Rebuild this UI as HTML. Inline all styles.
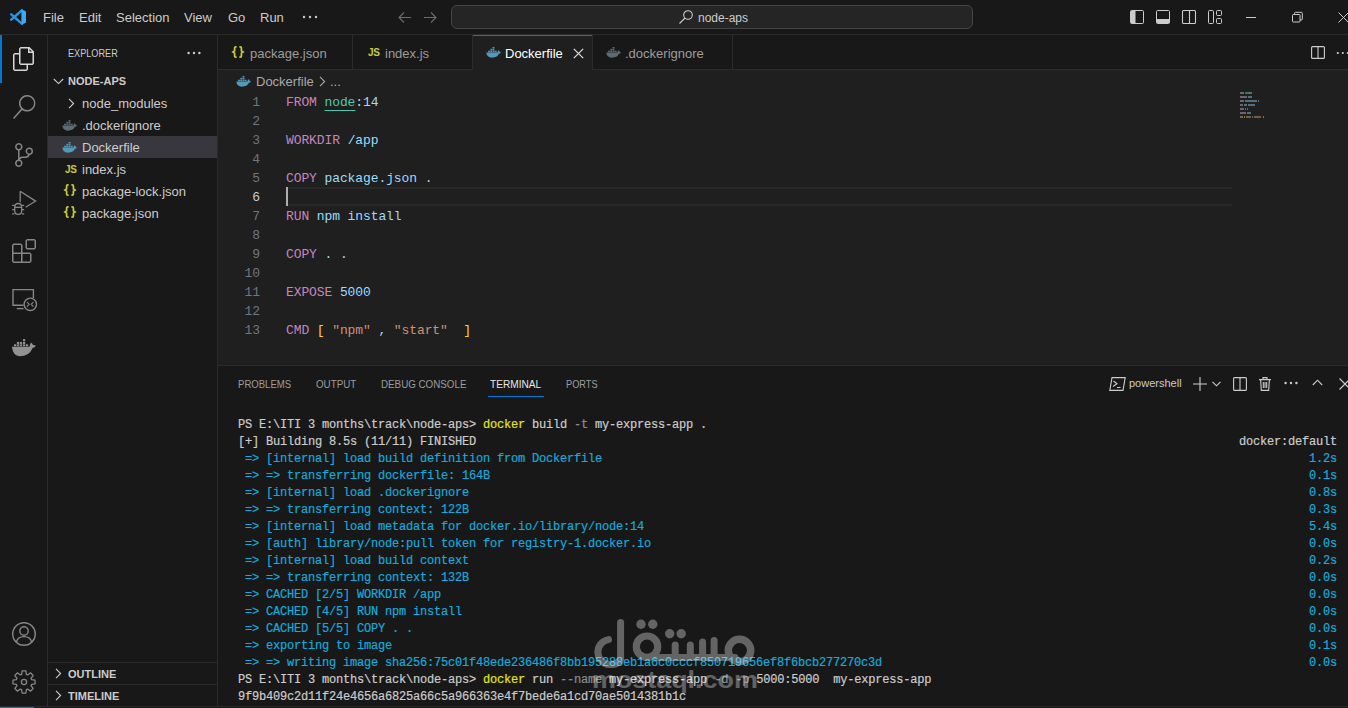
<!DOCTYPE html>
<html><head><meta charset="utf-8">
<style>
*{margin:0;padding:0;box-sizing:border-box}
html,body{width:1348px;height:708px;overflow:hidden;background:#181818;font-family:"Liberation Sans",sans-serif;color:#cccccc}
.a{position:absolute}
.t{position:absolute;white-space:pre;line-height:1}
.mono{font-family:"Liberation Mono",monospace}
svg{position:absolute;overflow:visible}
.term{font-size:12px;line-height:17px;letter-spacing:-0.2px;-webkit-text-stroke:0.2px currentColor}
</style></head><body>
<!-- title bar -->
<div class="a" style="left:0;top:0;width:1348px;height:34px;background:#181818"></div>
<div class="a" style="left:0;top:34px;width:1348px;height:1px;background:#2b2b2b"></div>
<div id="menu">
<span class="t" style="left:43px;top:11px;font-size:13px">File</span>
<span class="t" style="left:79px;top:11px;font-size:13px">Edit</span>
<span class="t" style="left:116px;top:11px;font-size:13px">Selection</span>
<span class="t" style="left:184px;top:11px;font-size:13px">View</span>
<span class="t" style="left:228px;top:11px;font-size:13px">Go</span>
<span class="t" style="left:260px;top:11px;font-size:13px">Run</span>
</div>
<!-- search box -->
<div class="a" style="left:451px;top:5px;width:522px;height:24px;background:#252525;border:1px solid #454545;border-radius:6px"></div>
<span class="t" style="left:698px;top:12px;font-size:12px">node-aps</span>


<!-- icons: title -->
<svg style="left:10px;top:9px" width="16" height="16" viewBox="0 0 16 16">
 <path d="M1.3 5.4L11.8 14.6M1.3 10.6L11.8 1.4" stroke="#2a95e0" stroke-width="2.5" stroke-linecap="round" fill="none"/>
 <path d="M11.4 0.2L15.3 2Q16 2.3 16 3.1V12.9Q16 13.7 15.3 14L11.4 15.8Z" fill="#3ca9f6"/>
</svg>
<svg style="left:302px;top:15px" width="16" height="4" viewBox="0 0 16 4"><circle cx="2" cy="2" r="1.2" fill="#cccccc"/><circle cx="8" cy="2" r="1.2" fill="#cccccc"/><circle cx="14" cy="2" r="1.2" fill="#cccccc"/></svg>
<svg style="left:397px;top:11px" width="16" height="14" viewBox="0 0 16 14" fill="none" stroke="#6b6b6b" stroke-width="1.1"><path d="M14 6.5H2.2M7 1.5L2 6.5L7 11.5"/></svg>
<svg style="left:422px;top:11px" width="16" height="14" viewBox="0 0 16 14" fill="none" stroke="#6b6b6b" stroke-width="1.1"><path d="M2 6.5H13.8M9 1.5L14 6.5L9 11.5"/></svg>
<svg style="left:678px;top:9px" width="16" height="16" viewBox="0 0 16 16" fill="none" stroke="#cccccc" stroke-width="1.1"><circle cx="10" cy="6" r="4.3"/><path d="M7 9L1.5 14.5"/></svg>
<!-- layout icons -->
<svg style="left:1129px;top:9px" width="16" height="16" viewBox="0 0 16 16"><rect x="1.5" y="1.5" width="13" height="13" rx="1" fill="none" stroke="#cccccc" stroke-width="1"/><rect x="2" y="2" width="4.5" height="12" fill="#cccccc"/></svg>
<svg style="left:1155px;top:9px" width="16" height="16" viewBox="0 0 16 16"><rect x="1.5" y="1.5" width="13" height="13" rx="1" fill="none" stroke="#cccccc" stroke-width="1"/><rect x="2" y="10" width="12" height="4" fill="#cccccc"/></svg>
<svg style="left:1181px;top:9px" width="16" height="16" viewBox="0 0 16 16" fill="none" stroke="#cccccc" stroke-width="1.1"><rect x="1.5" y="1.5" width="13" height="13" rx="1"/><path d="M8.5 1.5V14.5"/></svg>
<svg style="left:1207px;top:9px" width="16" height="16" viewBox="0 0 16 16" fill="none" stroke="#cccccc" stroke-width="1"><rect x="1.5" y="1.5" width="5" height="13" rx="1"/><rect x="9.5" y="1.5" width="5" height="5" rx="1"/><rect x="9.5" y="9.5" width="5" height="5" rx="1"/></svg>
<div class="a" style="left:1246px;top:17px;width:10px;height:1px;background:#cccccc"></div>
<svg style="left:1288px;top:8px" width="18" height="18" viewBox="1288 8 18 18" fill="none" stroke="#cccccc" stroke-width="1"><rect x="1292.5" y="14.5" width="7.5" height="7.5" rx="0.8"/><path d="M1294.5 14.5V13.3Q1294.5 12.3 1295.5 12.3H1301.3Q1302.3 12.3 1302.3 13.3V19Q1302.3 20 1301.3 20H1300"/></svg>
<svg style="left:1338px;top:12px" width="12" height="11" viewBox="0 0 12 11" fill="none" stroke="#cccccc" stroke-width="1"><path d="M0.5 0.5L10.5 10.5M10.5 0.5L0.5 10.5"/></svg>

<!-- activity bar icons -->
<svg style="left:12px;top:47px" width="24" height="24" viewBox="0 0 24 24"><path fill="#d7d7d7" d="M17.5 0h-9L7 1.5V6H2.5L1 7.5v15.07L2.5 24h12.07L16 22.57V18h4.7l1.3-1.43V4.5L17.5 0zm0 2.12l2.38 2.38H17.5V2.12zm-3 20.38h-12v-15H7v9.07L8.5 18h6v4.5zm6-6h-12v-15H16V6h4.5v10.5z"/></svg>
<svg style="left:12px;top:95px" width="24" height="24" viewBox="0 0 24 24"><path fill="#868686" d="M15.25 0a8.25 8.25 0 0 0-6.18 13.72L1 22.88l1.12 1.12 8.05-9.12A8.251 8.251 0 1 0 15.25.01V0zm0 15a6.75 6.75 0 1 1 0-13.5 6.75 6.75 0 0 1 0 13.5z"/></svg>
<svg style="left:12px;top:143px" width="24" height="24" viewBox="0 0 24 24"><path fill="#868686" d="M21.007 8.222A3.738 3.738 0 0 0 15.045 5.2a3.737 3.737 0 0 0 1.156 6.583 2.988 2.988 0 0 1-2.668 1.67h-2.99a4.456 4.456 0 0 0-2.989 1.165V7.4a3.737 3.737 0 1 0-1.494 0v9.117a3.776 3.776 0 1 0 1.816.099 2.99 2.99 0 0 1 2.668-1.667h2.99a4.484 4.484 0 0 0 4.223-3.039 3.736 3.736 0 0 0 3.25-3.687zM4.565 3.738a2.242 2.242 0 1 1 4.484 0 2.242 2.242 0 0 1-4.484 0zm4.484 16.441a2.242 2.242 0 1 1-4.484 0 2.242 2.242 0 0 1 4.484 0zm8.221-9.715a2.242 2.242 0 1 1 0-4.485 2.242 2.242 0 0 1 0 4.485z"/></svg>
<svg style="left:8px;top:185px" width="32" height="35" viewBox="8 185 32 35" fill="none" stroke="#868686" stroke-width="1.3"><path d="M20.2 191.2V202.3M20.2 191.2L35.6 201.1L25.7 207.3"/><path d="M14.7 207.6Q14.7 203.5 18.2 203.5Q21.7 203.5 21.7 207.6V210.8Q21.7 214.4 18.2 214.4Q14.7 214.4 14.7 210.8ZM14.7 207.3H21.7M12.2 205.4H14.4M12.2 209.6H14.4M12.2 213.9H14.4M22 205.4H24.2M22 209.6H24.2M22 213.9H24.2"/></svg>
<svg style="left:12px;top:239px" width="24" height="24" viewBox="0 0 24 24"><path fill="#868686" d="M13.5 1.5L15 0h7.5L24 1.5V9l-1.5 1.5H15L13.5 9V1.5zm1.5 0V9h7.5V1.5H15zM0 15V6l1.5-1.5H9L10.5 6v7.5H18l1.5 1.5v7.5L18 24H1.5L0 22.5V15zm9-1.5V6H1.5v7.5H9zM9 15H1.5v7.5H9V15zm1.5 7.5H18V15h-7.5v7.5z"/></svg>
<svg style="left:9px;top:285px" width="30" height="28" viewBox="9 285 30 28" fill="none" stroke="#868686" stroke-width="1.4"><path d="M23.5 305.3H13V289.6H33.4V298"/><path d="M16.8 308.6H23.5"/><circle cx="30.3" cy="304.3" r="6.2"/><path d="M27 302.1L29.2 304.3L27 306.5M33.4 302.1L31.2 304.3L33.4 306.5" stroke-width="1.1"/></svg>
<svg style="left:9px;top:334px" width="30" height="26" viewBox="9 334 30 26"><g fill="#929292">
<rect x="23" y="339.1" width="2.2" height="2.1"/>
<rect x="16.9" y="341.9" width="2.2" height="2.1"/><rect x="19.9" y="341.9" width="2.2" height="2.1"/><rect x="23" y="341.9" width="2.2" height="2.1"/>
<rect x="14" y="344.3" width="2.2" height="2"/><rect x="16.9" y="344.3" width="2.2" height="2"/><rect x="19.9" y="344.3" width="2.2" height="2"/><rect x="23" y="344.3" width="2.2" height="2"/><rect x="25.9" y="344.3" width="2.2" height="2"/>
<path d="M11.9 346.7H29.5Q30 343.6 31 342.4Q32.6 343.5 33 345.1Q34.8 345 35.8 345.8Q34.8 347.6 32.6 347.9Q29.2 356.2 19.8 356.2Q13 356 11.9 346.7Z"/></g></svg>
<svg style="left:12px;top:622px" width="24" height="24" viewBox="0 0 24 24" fill="none" stroke="#868686" stroke-width="1.4"><circle cx="12" cy="12" r="11.3"/><circle cx="12" cy="9" r="4.2"/><path d="M4.3 20.3Q5.5 14.6 12 14.6Q18.5 14.6 19.7 20.3"/></svg>
<svg style="left:10px;top:668px" width="28" height="28" viewBox="10 668 28 28" fill="none" stroke="#868686" stroke-width="1.3" stroke-linejoin="round"><path d="M21.66 674.35L22.06 670.97L25.94 670.97L26.34 674.35L27.76 674.94L30.42 672.83L33.17 675.58L31.06 678.24L31.65 679.66L35.03 680.06L35.03 683.94L31.65 684.34L31.06 685.76L33.17 688.42L30.42 691.17L27.76 689.06L26.34 689.65L25.94 693.03L22.06 693.03L21.66 689.65L20.24 689.06L17.58 691.17L14.83 688.42L16.94 685.76L16.35 684.34L12.97 683.94L12.97 680.06L16.35 679.66L16.94 678.24L14.83 675.58L17.58 672.83L20.24 674.94Z"/><circle cx="24" cy="682" r="2.6"/></svg>

<!-- activity bar -->
<div class="a" style="left:47px;top:35px;width:1px;height:673px;background:#2b2b2b"></div>
<div class="a" style="left:0;top:35px;width:2px;height:48px;background:#0078d4"></div>

<!-- sidebar -->
<div class="a" style="left:217px;top:35px;width:1px;height:673px;background:#2b2b2b"></div>
<span class="t" style="left:68px;top:48px;font-size:11px;transform:scaleX(0.83);transform-origin:0 0">EXPLORER</span>
<span class="t" style="left:68px;top:76px;font-size:11px;font-weight:bold">NODE-APS</span>
<div class="a" style="left:48px;top:136px;width:169px;height:22px;background:#37373d"></div>
<span class="t" style="left:82px;top:97px;font-size:13px">node_modules</span>
<span class="t" style="left:82px;top:119px;font-size:13px">.dockerignore</span>
<span class="t" style="left:82px;top:141px;font-size:13px">Dockerfile</span>
<span class="t" style="left:82px;top:163px;font-size:13px">index.js</span>
<span class="t" style="left:82px;top:185px;font-size:13px">package-lock.json</span>
<span class="t" style="left:82px;top:207px;font-size:13px">package.json</span>
<div class="a" style="left:48px;top:662px;width:169px;height:1px;background:#2b2b2b"></div>
<div class="a" style="left:48px;top:684px;width:169px;height:1px;background:#2b2b2b"></div>
<span class="t" style="left:68px;top:669px;font-size:11px;font-weight:bold">OUTLINE</span>
<span class="t" style="left:68px;top:691px;font-size:11px;font-weight:bold">TIMELINE</span>

<!-- sidebar icons -->
<svg style="left:187px;top:51px" width="14" height="4" viewBox="0 0 14 4"><circle cx="1.6" cy="2" r="1.2" fill="#cccccc"/><circle cx="7" cy="2" r="1.2" fill="#cccccc"/><circle cx="12.4" cy="2" r="1.2" fill="#cccccc"/></svg>
<svg style="left:53px;top:78px" width="11" height="7" viewBox="0 0 11 7" fill="none" stroke="#cccccc" stroke-width="1.1"><path d="M0.8 1L5.5 5.6L10.2 1"/></svg>
<svg style="left:68px;top:98px" width="7" height="11" viewBox="0 0 7 11" fill="none" stroke="#cccccc" stroke-width="1.1"><path d="M1 0.8L5.6 5.5L1 10.2"/></svg>
<svg style="left:62px;top:120px" width="15" height="11" viewBox="0 0 16 11"><g fill="#5d6b72"><rect x="2.2" y="3.6" width="2" height="1.7"/><rect x="4.6" y="3.6" width="2" height="1.7"/><rect x="7" y="3.6" width="2" height="1.7"/><rect x="9.4" y="3.6" width="2" height="1.7"/><rect x="4.6" y="1.6" width="2" height="1.7"/><rect x="7" y="1.6" width="2" height="1.7"/><rect x="7" y="-0.4" width="2" height="1.7"/><path d="M0.3 5.6H12.2Q12.5 3.8 13.6 3.2Q14.6 4 14.6 5Q15.6 4.9 16 5.5Q15.3 6.8 13.8 6.9Q12 11 6.2 11Q1 11 0.3 5.6Z"/></g></svg>
<svg style="left:62px;top:142px" width="15" height="11" viewBox="0 0 16 11"><g fill="#519aba"><rect x="2.2" y="3.6" width="2" height="1.7"/><rect x="4.6" y="3.6" width="2" height="1.7"/><rect x="7" y="3.6" width="2" height="1.7"/><rect x="9.4" y="3.6" width="2" height="1.7"/><rect x="4.6" y="1.6" width="2" height="1.7"/><rect x="7" y="1.6" width="2" height="1.7"/><rect x="7" y="-0.4" width="2" height="1.7"/><path d="M0.3 5.6H12.2Q12.5 3.8 13.6 3.2Q14.6 4 14.6 5Q15.6 4.9 16 5.5Q15.3 6.8 13.8 6.9Q12 11 6.2 11Q1 11 0.3 5.6Z"/></g></svg>
<span class="t" style="left:65px;top:165px;font-size:10px;font-weight:bold;color:#cbcb41;letter-spacing:-0.3px">JS</span>
<svg style="left:64px;top:184px" width="12" height="12" viewBox="0 0 12 12" fill="none" stroke="#cbcb41" stroke-width="1.7"><path d="M4.6 0.9H3.7Q2.6 0.9 2.6 2V4.9L0.9 6L2.6 7.1V10Q2.6 11.1 3.7 11.1H4.6"/><path d="M7.4 0.9H8.3Q9.4 0.9 9.4 2V4.9L11.1 6L9.4 7.1V10Q9.4 11.1 8.3 11.1H7.4"/></svg>
<svg style="left:64px;top:206px" width="12" height="12" viewBox="0 0 12 12" fill="none" stroke="#cbcb41" stroke-width="1.7"><path d="M4.6 0.9H3.7Q2.6 0.9 2.6 2V4.9L0.9 6L2.6 7.1V10Q2.6 11.1 3.7 11.1H4.6"/><path d="M7.4 0.9H8.3Q9.4 0.9 9.4 2V4.9L11.1 6L9.4 7.1V10Q9.4 11.1 8.3 11.1H7.4"/></svg>
<svg style="left:55px;top:668px" width="7" height="11" viewBox="0 0 7 11" fill="none" stroke="#cccccc" stroke-width="1.1"><path d="M1 0.8L5.6 5.5L1 10.2"/></svg>
<svg style="left:55px;top:690px" width="7" height="11" viewBox="0 0 7 11" fill="none" stroke="#cccccc" stroke-width="1.1"><path d="M1 0.8L5.6 5.5L1 10.2"/></svg>

<!-- editor -->
<div class="a" style="left:218px;top:35px;width:1130px;height:35px;background:#181818"></div>
<div class="a" style="left:218px;top:69px;width:1130px;height:1px;background:#2b2b2b"></div>
<div class="a" style="left:218px;top:70px;width:1130px;height:295px;background:#1f1f1f"></div>
<!-- tabs -->
<div class="a" style="left:352px;top:35px;width:1px;height:34px;background:#2b2b2b"></div>
<div class="a" style="left:472px;top:35px;width:1px;height:34px;background:#2b2b2b"></div>
<div class="a" style="left:473px;top:35px;width:119px;height:35px;background:#1f1f1f;border-top:1px solid #0078d4"></div>
<div class="a" style="left:592px;top:35px;width:1px;height:34px;background:#2b2b2b"></div>
<div class="a" style="left:732px;top:35px;width:1px;height:34px;background:#2b2b2b"></div>
<span class="t" style="left:250px;top:47px;font-size:13px;color:#9d9d9d">package.json</span>
<span class="t" style="left:385px;top:47px;font-size:13px;color:#9d9d9d">index.js</span>
<span class="t" style="left:505px;top:47px;font-size:13px;color:#ffffff">Dockerfile</span>
<span class="t" style="left:625px;top:47px;font-size:13px;color:#9d9d9d">.dockerignore</span>
<span class="t" style="left:256px;top:75px;font-size:13px;color:#a9a9a9">Dockerfile</span>

<svg style="left:232px;top:46px" width="12" height="12" viewBox="0 0 12 12" fill="none" stroke="#cbcb41" stroke-width="1.7"><path d="M4.6 0.9H3.7Q2.6 0.9 2.6 2V4.9L0.9 6L2.6 7.1V10Q2.6 11.1 3.7 11.1H4.6"/><path d="M7.4 0.9H8.3Q9.4 0.9 9.4 2V4.9L11.1 6L9.4 7.1V10Q9.4 11.1 8.3 11.1H7.4"/></svg>
<span class="t" style="left:368px;top:48px;font-size:10px;font-weight:bold;color:#cbcb41;letter-spacing:-0.3px">JS</span>
<svg style="left:486px;top:47px" width="15" height="11" viewBox="0 0 16 11"><g fill="#519aba"><rect x="2.2" y="3.6" width="2" height="1.7"/><rect x="4.6" y="3.6" width="2" height="1.7"/><rect x="7" y="3.6" width="2" height="1.7"/><rect x="9.4" y="3.6" width="2" height="1.7"/><rect x="4.6" y="1.6" width="2" height="1.7"/><rect x="7" y="1.6" width="2" height="1.7"/><rect x="7" y="-0.4" width="2" height="1.7"/><path d="M0.3 5.6H12.2Q12.5 3.8 13.6 3.2Q14.6 4 14.6 5Q15.6 4.9 16 5.5Q15.3 6.8 13.8 6.9Q12 11 6.2 11Q1 11 0.3 5.6Z"/></g></svg>
<svg style="left:606px;top:47px" width="15" height="11" viewBox="0 0 16 11"><g fill="#5d6b72"><rect x="2.2" y="3.6" width="2" height="1.7"/><rect x="4.6" y="3.6" width="2" height="1.7"/><rect x="7" y="3.6" width="2" height="1.7"/><rect x="9.4" y="3.6" width="2" height="1.7"/><rect x="4.6" y="1.6" width="2" height="1.7"/><rect x="7" y="1.6" width="2" height="1.7"/><rect x="7" y="-0.4" width="2" height="1.7"/><path d="M0.3 5.6H12.2Q12.5 3.8 13.6 3.2Q14.6 4 14.6 5Q15.6 4.9 16 5.5Q15.3 6.8 13.8 6.9Q12 11 6.2 11Q1 11 0.3 5.6Z"/></g></svg>
<svg style="left:573px;top:48px" width="11" height="11" viewBox="0 0 11 11" fill="none" stroke="#e0e0e0" stroke-width="1.2"><path d="M0.8 0.8L10.2 10.2M10.2 0.8L0.8 10.2"/></svg>
<svg style="left:1311px;top:46px" width="14" height="13" viewBox="0 0 14 13" fill="none" stroke="#cccccc" stroke-width="1.1"><rect x="0.6" y="0.6" width="12.8" height="11.8" rx="1"/><path d="M7 0.6V12.4"/></svg>
<svg style="left:1336px;top:51px" width="14" height="4" viewBox="0 0 14 4"><circle cx="1.8" cy="2" r="1.1" fill="#cccccc"/><circle cx="6.8" cy="2" r="1.1" fill="#cccccc"/><circle cx="11.8" cy="2" r="1.1" fill="#cccccc"/></svg>
<svg style="left:236px;top:76px" width="15" height="11" viewBox="0 0 16 11"><g fill="#519aba"><rect x="2.2" y="3.6" width="2" height="1.7"/><rect x="4.6" y="3.6" width="2" height="1.7"/><rect x="7" y="3.6" width="2" height="1.7"/><rect x="9.4" y="3.6" width="2" height="1.7"/><rect x="4.6" y="1.6" width="2" height="1.7"/><rect x="7" y="1.6" width="2" height="1.7"/><rect x="7" y="-0.4" width="2" height="1.7"/><path d="M0.3 5.6H12.2Q12.5 3.8 13.6 3.2Q14.6 4 14.6 5Q15.6 4.9 16 5.5Q15.3 6.8 13.8 6.9Q12 11 6.2 11Q1 11 0.3 5.6Z"/></g></svg>
<svg style="left:319px;top:76px" width="7" height="11" viewBox="0 0 7 11" fill="none" stroke="#a9a9a9" stroke-width="1.1"><path d="M1 0.8L5.6 5.5L1 10.2"/></svg>
<span class="t" style="left:330px;top:75px;font-size:13px;color:#a9a9a9">...</span>
<svg style="left:1109px;top:377px" width="17" height="14" viewBox="0 0 17 14" fill="none" stroke="#cccccc" stroke-width="1.1"><path d="M3 0.6H16.2L14 13.4H0.8Z"/><path d="M4.5 4L8 6.8L4 9.5M8 10.5H11.5"/></svg>
<span class="t" style="left:1129px;top:378px;font-size:11px;color:#cccccc">powershell</span>
<svg style="left:1193px;top:377px" width="14" height="14" viewBox="0 0 14 14" fill="none" stroke="#cccccc" stroke-width="1.1"><path d="M7 0V14M0 7H14"/></svg>
<svg style="left:1212px;top:381px" width="9" height="6" viewBox="0 0 9 6" fill="none" stroke="#cccccc" stroke-width="1.1"><path d="M0.5 0.8L4.5 4.8L8.5 0.8"/></svg>
<svg style="left:1233px;top:377px" width="14" height="14" viewBox="0 0 14 14" fill="none" stroke="#cccccc" stroke-width="1.1"><rect x="0.6" y="0.6" width="12.8" height="12.8" rx="1"/><path d="M7 0.6V13.4"/></svg>
<svg style="left:1259px;top:377px" width="12" height="14" viewBox="0 0 12 14" fill="none" stroke="#cccccc" stroke-width="1.1"><path d="M0 2.6H12M4 2.6V0.6H8V2.6M1.6 2.6L2.3 13.4H9.7L10.4 2.6M4.3 5V11M6 5V11M7.7 5V11"/></svg>
<svg style="left:1284px;top:381px" width="14" height="4" viewBox="0 0 14 4"><circle cx="1.6" cy="2" r="1.2" fill="#cccccc"/><circle cx="7" cy="2" r="1.2" fill="#cccccc"/><circle cx="12.4" cy="2" r="1.2" fill="#cccccc"/></svg>
<svg style="left:1312px;top:379px" width="11" height="7" viewBox="0 0 11 7" fill="none" stroke="#cccccc" stroke-width="1.1"><path d="M0.8 6L5.5 1.2L10.2 6"/></svg>
<svg style="left:1339px;top:378px" width="12" height="12" viewBox="0 0 12 12" fill="none" stroke="#cccccc" stroke-width="1.1"><path d="M0.5 0.5L11.5 11.5M11.5 0.5L0.5 11.5"/></svg>

<!-- minimap -->
<div class="a" style="left:1240px;top:92px;width:40px;height:28px;opacity:0.5">
<div class="a" style="left:0px;top:0px;width:1px;height:2px;background:#b9a9bd"></div>
<div class="a" style="left:1px;top:0px;width:1px;height:2px;background:#b9a9bd"></div>
<div class="a" style="left:2px;top:0px;width:1px;height:2px;background:#b9a9bd"></div>
<div class="a" style="left:3px;top:0px;width:1px;height:2px;background:#b9a9bd"></div>
<div class="a" style="left:5px;top:0px;width:1px;height:2px;background:#4ec9b0"></div>
<div class="a" style="left:6px;top:0px;width:1px;height:2px;background:#4ec9b0"></div>
<div class="a" style="left:7px;top:0px;width:1px;height:2px;background:#4ec9b0"></div>
<div class="a" style="left:8px;top:0px;width:1px;height:2px;background:#4ec9b0"></div>
<div class="a" style="left:9px;top:0px;width:1px;height:2px;background:#cccccc"></div>
<div class="a" style="left:10px;top:0px;width:1px;height:2px;background:#8ab8d8"></div>
<div class="a" style="left:11px;top:0px;width:1px;height:2px;background:#8ab8d8"></div>
<div class="a" style="left:0px;top:4px;width:1px;height:2px;background:#b9a9bd"></div>
<div class="a" style="left:1px;top:4px;width:1px;height:2px;background:#b9a9bd"></div>
<div class="a" style="left:2px;top:4px;width:1px;height:2px;background:#b9a9bd"></div>
<div class="a" style="left:3px;top:4px;width:1px;height:2px;background:#b9a9bd"></div>
<div class="a" style="left:4px;top:4px;width:1px;height:2px;background:#b9a9bd"></div>
<div class="a" style="left:5px;top:4px;width:1px;height:2px;background:#b9a9bd"></div>
<div class="a" style="left:6px;top:4px;width:1px;height:2px;background:#b9a9bd"></div>
<div class="a" style="left:8px;top:4px;width:1px;height:2px;background:#8ab8d8"></div>
<div class="a" style="left:9px;top:4px;width:1px;height:2px;background:#8ab8d8"></div>
<div class="a" style="left:10px;top:4px;width:1px;height:2px;background:#8ab8d8"></div>
<div class="a" style="left:11px;top:4px;width:1px;height:2px;background:#8ab8d8"></div>
<div class="a" style="left:0px;top:8px;width:1px;height:2px;background:#b9a9bd"></div>
<div class="a" style="left:1px;top:8px;width:1px;height:2px;background:#b9a9bd"></div>
<div class="a" style="left:2px;top:8px;width:1px;height:2px;background:#b9a9bd"></div>
<div class="a" style="left:3px;top:8px;width:1px;height:2px;background:#b9a9bd"></div>
<div class="a" style="left:5px;top:8px;width:1px;height:2px;background:#8ab8d8"></div>
<div class="a" style="left:6px;top:8px;width:1px;height:2px;background:#8ab8d8"></div>
<div class="a" style="left:7px;top:8px;width:1px;height:2px;background:#8ab8d8"></div>
<div class="a" style="left:8px;top:8px;width:1px;height:2px;background:#8ab8d8"></div>
<div class="a" style="left:9px;top:8px;width:1px;height:2px;background:#8ab8d8"></div>
<div class="a" style="left:10px;top:8px;width:1px;height:2px;background:#8ab8d8"></div>
<div class="a" style="left:11px;top:8px;width:1px;height:2px;background:#8ab8d8"></div>
<div class="a" style="left:12px;top:8px;width:1px;height:2px;background:#8ab8d8"></div>
<div class="a" style="left:13px;top:8px;width:1px;height:2px;background:#8ab8d8"></div>
<div class="a" style="left:14px;top:8px;width:1px;height:2px;background:#8ab8d8"></div>
<div class="a" style="left:15px;top:8px;width:1px;height:2px;background:#8ab8d8"></div>
<div class="a" style="left:16px;top:8px;width:1px;height:2px;background:#8ab8d8"></div>
<div class="a" style="left:18px;top:8px;width:1px;height:2px;background:#8ab8d8"></div>
<div class="a" style="left:0px;top:12px;width:1px;height:2px;background:#b9a9bd"></div>
<div class="a" style="left:1px;top:12px;width:1px;height:2px;background:#b9a9bd"></div>
<div class="a" style="left:2px;top:12px;width:1px;height:2px;background:#b9a9bd"></div>
<div class="a" style="left:4px;top:12px;width:1px;height:2px;background:#8ab8d8"></div>
<div class="a" style="left:5px;top:12px;width:1px;height:2px;background:#8ab8d8"></div>
<div class="a" style="left:6px;top:12px;width:1px;height:2px;background:#8ab8d8"></div>
<div class="a" style="left:8px;top:12px;width:1px;height:2px;background:#8ab8d8"></div>
<div class="a" style="left:9px;top:12px;width:1px;height:2px;background:#8ab8d8"></div>
<div class="a" style="left:10px;top:12px;width:1px;height:2px;background:#8ab8d8"></div>
<div class="a" style="left:11px;top:12px;width:1px;height:2px;background:#8ab8d8"></div>
<div class="a" style="left:12px;top:12px;width:1px;height:2px;background:#8ab8d8"></div>
<div class="a" style="left:13px;top:12px;width:1px;height:2px;background:#8ab8d8"></div>
<div class="a" style="left:14px;top:12px;width:1px;height:2px;background:#8ab8d8"></div>
<div class="a" style="left:0px;top:16px;width:1px;height:2px;background:#b9a9bd"></div>
<div class="a" style="left:1px;top:16px;width:1px;height:2px;background:#b9a9bd"></div>
<div class="a" style="left:2px;top:16px;width:1px;height:2px;background:#b9a9bd"></div>
<div class="a" style="left:3px;top:16px;width:1px;height:2px;background:#b9a9bd"></div>
<div class="a" style="left:5px;top:16px;width:1px;height:2px;background:#8ab8d8"></div>
<div class="a" style="left:7px;top:16px;width:1px;height:2px;background:#8ab8d8"></div>
<div class="a" style="left:0px;top:20px;width:1px;height:2px;background:#b9a9bd"></div>
<div class="a" style="left:1px;top:20px;width:1px;height:2px;background:#b9a9bd"></div>
<div class="a" style="left:2px;top:20px;width:1px;height:2px;background:#b9a9bd"></div>
<div class="a" style="left:3px;top:20px;width:1px;height:2px;background:#b9a9bd"></div>
<div class="a" style="left:4px;top:20px;width:1px;height:2px;background:#b9a9bd"></div>
<div class="a" style="left:5px;top:20px;width:1px;height:2px;background:#b9a9bd"></div>
<div class="a" style="left:7px;top:20px;width:1px;height:2px;background:#8ab8d8"></div>
<div class="a" style="left:8px;top:20px;width:1px;height:2px;background:#8ab8d8"></div>
<div class="a" style="left:9px;top:20px;width:1px;height:2px;background:#8ab8d8"></div>
<div class="a" style="left:10px;top:20px;width:1px;height:2px;background:#8ab8d8"></div>
<div class="a" style="left:0px;top:24px;width:1px;height:2px;background:#b9a9bd"></div>
<div class="a" style="left:1px;top:24px;width:1px;height:2px;background:#b9a9bd"></div>
<div class="a" style="left:2px;top:24px;width:1px;height:2px;background:#b9a9bd"></div>
<div class="a" style="left:4px;top:24px;width:1px;height:2px;background:#ffd700"></div>
<div class="a" style="left:6px;top:24px;width:1px;height:2px;background:#ce9178"></div>
<div class="a" style="left:7px;top:24px;width:1px;height:2px;background:#ce9178"></div>
<div class="a" style="left:8px;top:24px;width:1px;height:2px;background:#ce9178"></div>
<div class="a" style="left:9px;top:24px;width:1px;height:2px;background:#ce9178"></div>
<div class="a" style="left:10px;top:24px;width:1px;height:2px;background:#ce9178"></div>
<div class="a" style="left:12px;top:24px;width:1px;height:2px;background:#8ab8d8"></div>
<div class="a" style="left:14px;top:24px;width:1px;height:2px;background:#ce9178"></div>
<div class="a" style="left:15px;top:24px;width:1px;height:2px;background:#ce9178"></div>
<div class="a" style="left:16px;top:24px;width:1px;height:2px;background:#ce9178"></div>
<div class="a" style="left:17px;top:24px;width:1px;height:2px;background:#ce9178"></div>
<div class="a" style="left:18px;top:24px;width:1px;height:2px;background:#ce9178"></div>
<div class="a" style="left:19px;top:24px;width:1px;height:2px;background:#ce9178"></div>
<div class="a" style="left:20px;top:24px;width:1px;height:2px;background:#ce9178"></div>
<div class="a" style="left:23px;top:24px;width:1px;height:2px;background:#ffd700"></div>
</div>

<!-- code -->
<div class="a" style="left:288px;top:187px;width:944px;height:19px;border-top:2px solid #282828;border-bottom:2px solid #282828"></div>
<div class="t mono" style="left:229px;width:31px;text-align:right;top:93px;font-size:13px;line-height:19px;letter-spacing:-0.1px;color:#6e7681">1</div>
<div class="t mono" style="left:286px;top:93px;font-size:13px;line-height:19px;letter-spacing:-0.1px"><span style="color:#c586c0">FROM</span><span style="color:#cccccc"> </span><span style="color:#4ec9b0;text-decoration:underline;text-underline-offset:4px">node</span><span style="color:#cccccc">:</span><span style="color:#9cdcfe">14</span></div>
<div class="t mono" style="left:229px;width:31px;text-align:right;top:112px;font-size:13px;line-height:19px;letter-spacing:-0.1px;color:#6e7681">2</div>
<div class="t mono" style="left:229px;width:31px;text-align:right;top:131px;font-size:13px;line-height:19px;letter-spacing:-0.1px;color:#6e7681">3</div>
<div class="t mono" style="left:286px;top:131px;font-size:13px;line-height:19px;letter-spacing:-0.1px"><span style="color:#c586c0">WORKDIR</span><span style="color:#cccccc"> </span><span style="color:#9cdcfe">/app</span></div>
<div class="t mono" style="left:229px;width:31px;text-align:right;top:150px;font-size:13px;line-height:19px;letter-spacing:-0.1px;color:#6e7681">4</div>
<div class="t mono" style="left:229px;width:31px;text-align:right;top:169px;font-size:13px;line-height:19px;letter-spacing:-0.1px;color:#6e7681">5</div>
<div class="t mono" style="left:286px;top:169px;font-size:13px;line-height:19px;letter-spacing:-0.1px"><span style="color:#c586c0">COPY</span><span style="color:#cccccc"> </span><span style="color:#9cdcfe">package.json .</span></div>
<div class="t mono" style="left:229px;width:31px;text-align:right;top:188px;font-size:13px;line-height:19px;letter-spacing:-0.1px;color:#cccccc">6</div>
<div class="t mono" style="left:229px;width:31px;text-align:right;top:207px;font-size:13px;line-height:19px;letter-spacing:-0.1px;color:#6e7681">7</div>
<div class="t mono" style="left:286px;top:207px;font-size:13px;line-height:19px;letter-spacing:-0.1px"><span style="color:#c586c0">RUN</span><span style="color:#cccccc"> </span><span style="color:#9cdcfe">npm install</span></div>
<div class="t mono" style="left:229px;width:31px;text-align:right;top:226px;font-size:13px;line-height:19px;letter-spacing:-0.1px;color:#6e7681">8</div>
<div class="t mono" style="left:229px;width:31px;text-align:right;top:245px;font-size:13px;line-height:19px;letter-spacing:-0.1px;color:#6e7681">9</div>
<div class="t mono" style="left:286px;top:245px;font-size:13px;line-height:19px;letter-spacing:-0.1px"><span style="color:#c586c0">COPY</span><span style="color:#cccccc"> </span><span style="color:#9cdcfe">. .</span></div>
<div class="t mono" style="left:229px;width:31px;text-align:right;top:264px;font-size:13px;line-height:19px;letter-spacing:-0.1px;color:#6e7681">10</div>
<div class="t mono" style="left:229px;width:31px;text-align:right;top:283px;font-size:13px;line-height:19px;letter-spacing:-0.1px;color:#6e7681">11</div>
<div class="t mono" style="left:286px;top:283px;font-size:13px;line-height:19px;letter-spacing:-0.1px"><span style="color:#c586c0">EXPOSE</span><span style="color:#cccccc"> </span><span style="color:#9cdcfe">5000</span></div>
<div class="t mono" style="left:229px;width:31px;text-align:right;top:302px;font-size:13px;line-height:19px;letter-spacing:-0.1px;color:#6e7681">12</div>
<div class="t mono" style="left:229px;width:31px;text-align:right;top:321px;font-size:13px;line-height:19px;letter-spacing:-0.1px;color:#6e7681">13</div>
<div class="t mono" style="left:286px;top:321px;font-size:13px;line-height:19px;letter-spacing:-0.1px"><span style="color:#c586c0">CMD</span><span style="color:#cccccc"> </span><span style="color:#ffd700">[</span><span style="color:#cccccc"> </span><span style="color:#ce9178">"npm"</span><span style="color:#cccccc"> </span><span style="color:#9cdcfe">,</span><span style="color:#cccccc"> </span><span style="color:#ce9178">"start"</span><span style="color:#cccccc">  </span><span style="color:#ffd700">]</span></div>
<div class="a" style="left:286px;top:187px;width:2px;height:19px;background:#aeafad"></div>

<!-- panel -->
<div class="a" style="left:218px;top:365px;width:1130px;height:1px;background:#2b2b2b"></div>
<span class="t" style="left:238px;top:379px;font-size:11px;color:#9d9d9d;transform:scaleX(0.87);transform-origin:0 0">PROBLEMS</span>
<span class="t" style="left:316px;top:379px;font-size:11px;color:#9d9d9d;transform:scaleX(0.89);transform-origin:0 0">OUTPUT</span>
<span class="t" style="left:381px;top:379px;font-size:11px;color:#9d9d9d;transform:scaleX(0.89);transform-origin:0 0">DEBUG CONSOLE</span>
<span class="t" style="left:490px;top:379px;font-size:11px;color:#e7e7e7;transform:scaleX(0.92);transform-origin:0 0">TERMINAL</span>
<span class="t" style="left:566px;top:379px;font-size:11px;color:#9d9d9d;transform:scaleX(0.84);transform-origin:0 0">PORTS</span>
<div class="a" style="left:488px;top:396px;width:56px;height:1px;background:#0078d4"></div>

<!-- terminal -->
<div class="t mono term" style="left:238px;top:417px"><span style="color:#cccccc">PS E:\ITI 3 months\track\node-aps&gt; </span><span style="color:#e5e510">docker</span><span style="color:#cccccc"> build </span><span style="color:#8c8c8c">-t</span><span style="color:#cccccc"> my-express-app .</span></div>
<div class="t mono term" style="left:238px;top:434px"><span style="color:#cccccc">[+] Building 8.5s (11/11) FINISHED</span></div>
<div class="t mono term" style="left:1239px;top:434px;color:#cccccc">docker:default</div>
<div class="t mono term" style="left:238px;top:451px"><span style="color:#14aadc"> =&gt; [internal] load build definition from Dockerfile</span></div>
<div class="t mono term" style="left:1309px;top:451px;color:#14aadc">1.2s</div>
<div class="t mono term" style="left:238px;top:468px"><span style="color:#14aadc"> =&gt; =&gt; transferring dockerfile: 164B</span></div>
<div class="t mono term" style="left:1309px;top:468px;color:#14aadc">0.1s</div>
<div class="t mono term" style="left:238px;top:485px"><span style="color:#14aadc"> =&gt; [internal] load .dockerignore</span></div>
<div class="t mono term" style="left:1309px;top:485px;color:#14aadc">0.8s</div>
<div class="t mono term" style="left:238px;top:502px"><span style="color:#14aadc"> =&gt; =&gt; transferring context: 122B</span></div>
<div class="t mono term" style="left:1309px;top:502px;color:#14aadc">0.3s</div>
<div class="t mono term" style="left:238px;top:519px"><span style="color:#14aadc"> =&gt; [internal] load metadata for docker.io/library/node:14</span></div>
<div class="t mono term" style="left:1309px;top:519px;color:#14aadc">5.4s</div>
<div class="t mono term" style="left:238px;top:536px"><span style="color:#14aadc"> =&gt; [auth] library/node:pull token for registry-1.docker.io</span></div>
<div class="t mono term" style="left:1309px;top:536px;color:#14aadc">0.0s</div>
<div class="t mono term" style="left:238px;top:553px"><span style="color:#14aadc"> =&gt; [internal] load build context</span></div>
<div class="t mono term" style="left:1309px;top:553px;color:#14aadc">0.2s</div>
<div class="t mono term" style="left:238px;top:570px"><span style="color:#14aadc"> =&gt; =&gt; transferring context: 132B</span></div>
<div class="t mono term" style="left:1309px;top:570px;color:#14aadc">0.0s</div>
<div class="t mono term" style="left:238px;top:587px"><span style="color:#14aadc"> =&gt; CACHED [2/5] WORKDIR /app</span></div>
<div class="t mono term" style="left:1309px;top:587px;color:#14aadc">0.0s</div>
<div class="t mono term" style="left:238px;top:604px"><span style="color:#14aadc"> =&gt; CACHED [4/5] RUN npm install</span></div>
<div class="t mono term" style="left:1309px;top:604px;color:#14aadc">0.0s</div>
<div class="t mono term" style="left:238px;top:621px"><span style="color:#14aadc"> =&gt; CACHED [5/5] COPY . .</span></div>
<div class="t mono term" style="left:1309px;top:621px;color:#14aadc">0.0s</div>
<div class="t mono term" style="left:238px;top:638px"><span style="color:#14aadc"> =&gt; exporting to image</span></div>
<div class="t mono term" style="left:1309px;top:638px;color:#14aadc">0.1s</div>
<div class="t mono term" style="left:238px;top:655px"><span style="color:#14aadc"> =&gt; =&gt; writing image sha256:75c01f48ede236486f8bb195288eb1a6c0cccf850719656ef8f6bcb277270c3d</span></div>
<div class="t mono term" style="left:1309px;top:655px;color:#14aadc">0.0s</div>
<div class="t mono term" style="left:238px;top:672px"><span style="color:#cccccc">PS E:\ITI 3 months\track\node-aps&gt; </span><span style="color:#e5e510">docker</span><span style="color:#cccccc"> run </span><span style="color:#8c8c8c">--name</span><span style="color:#cccccc"> my-express-app </span><span style="color:#8c8c8c">-d</span><span style="color:#cccccc"> </span><span style="color:#8c8c8c">-p</span><span style="color:#cccccc"> 5000:5000  my-express-app</span></div>
<div class="t mono term" style="left:238px;top:689px"><span style="color:#cccccc">9f9b409c2d11f24e4656a6825a66c5a966363e4f7bede6a1cd70ae5014381b1c</span></div>

<!-- watermark -->
<svg style="left:585px;top:612px;opacity:0.33" width="180" height="80" viewBox="585 612 180 80" fill="none" stroke="#ffffff" stroke-width="7" stroke-linecap="round">
 <path d="M620.6 622.6V658"/>
 <path d="M608.5 639.6A12.6 12.6 0 0 0 609.5 664.6Q620.6 664.6 620.6 657"/>
 <circle cx="647" cy="646.7" r="10.7" stroke-width="7.2"/>
 <path d="M656 657.5H735"/>
 <path d="M675.2 645V657M690.3 645V657M702.6 642V657M714.1 640.5V657"/>
 <circle cx="739.5" cy="650.5" r="11.2" stroke-width="7.5"/>
 <g fill="#ffffff" stroke="none"><circle cx="641" cy="624.3" r="4.7"/><circle cx="652.8" cy="624.3" r="4.7"/><circle cx="669.7" cy="633.8" r="4.7"/><circle cx="681.2" cy="633.8" r="4.7"/></g>
</svg>
<span class="t" style="left:592px;top:668px;font-size:24px;font-weight:bold;color:#ffffff;opacity:0.32;transform:scaleX(1.12);transform-origin:0 0">mostaql.com</span>


<!-- status bar -->
<div class="a" style="left:0;top:706px;width:1348px;height:2px;background:#181818;border-top:1px solid #2b2b2b"></div>
<div class="a" style="left:0;top:707px;width:34px;height:1px;background:#0078d4"></div>
</body></html>
